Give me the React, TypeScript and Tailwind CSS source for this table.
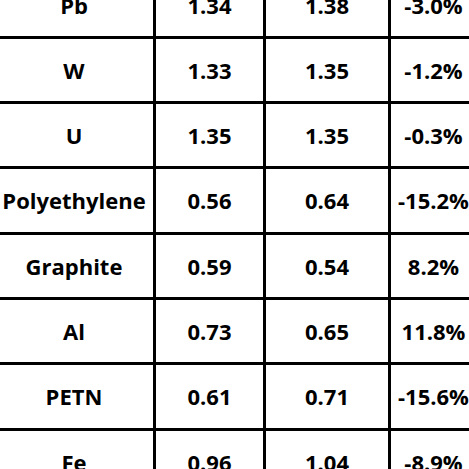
import React from 'react';

const rows = [
  { name: 'Pb', a: '1.34', b: '1.38', diff: '-3.0%' },
  { name: 'W', a: '1.33', b: '1.35', diff: '-1.2%' },
  { name: 'U', a: '1.35', b: '1.35', diff: '-0.3%' },
  { name: 'Polyethylene', a: '0.56', b: '0.64', diff: '-15.2%' },
  { name: 'Graphite', a: '0.59', b: '0.54', diff: '8.2%' },
  { name: 'Al', a: '0.73', b: '0.65', diff: '11.8%' },
  { name: 'PETN', a: '0.61', b: '0.71', diff: '-15.6%' },
  { name: 'Fe', a: '0.96', b: '1.04', diff: '-8.9%' },
];

export default function App() {
  return (
    <div className="w-[469px] h-[469px] overflow-hidden bg-white">
      <div
        className="grid grid-cols-[158px_107px_122px_85px] grid-rows-[62px_62px_62px_63px_62px_62px_63px_62px] gap-[3px] p-[3px] bg-black w-max -mt-[29px] -ml-[8px] font-bold text-[22px] text-black"
        style={{ fontFamily: '"Open Sans", "Liberation Sans", sans-serif' }}
      >
        {rows.map((row) => (
          <React.Fragment key={row.name}>
            <div className="bg-white flex items-center justify-center whitespace-nowrap">
              {row.name}
            </div>
            <div className="bg-white flex items-center justify-center">
              {row.a}
            </div>
            <div className="bg-white flex items-center justify-center">
              {row.b}
            </div>
            <div className="bg-white flex items-center justify-center whitespace-nowrap">
              {row.diff}
            </div>
          </React.Fragment>
        ))}
      </div>
    </div>
  );
}
